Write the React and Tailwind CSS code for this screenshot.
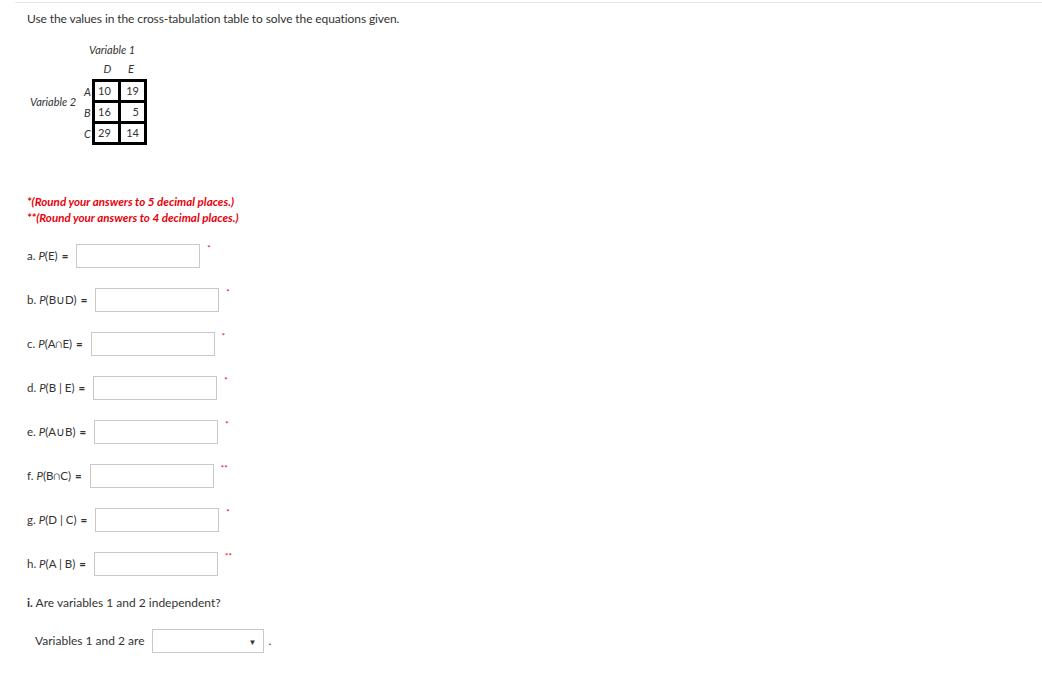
import React, { useState } from 'react';

const rows = [
  { key: 'a', label: 'P(E)', stars: '*' },
  { key: 'b', label: 'P(B\u222AD)', stars: '*' },
  { key: 'c', label: 'P(A\u2229E)', stars: '*' },
  { key: 'd', label: 'P(B | E)', stars: '*' },
  { key: 'e', label: 'P(A\u222AB)', stars: '*' },
  { key: 'f', label: 'P(B\u2229C)', stars: '**' },
  { key: 'g', label: 'P(D | C)', stars: '*' },
  { key: 'h', label: 'P(A | B)', stars: '**' },
];

const table = [
  ['A', '10', '19'],
  ['B', '16', '5'],
  ['C', '29', '14'],
];

const App = () => {
  const [answers, setAnswers] = useState({});
  const [independent, setIndependent] = useState('');

  const handleChange = (key, e) => {
    setAnswers((prev) => ({ ...prev, [key]: e.target.value }));
  };

  return (
    <div className="min-h-[678px] bg-white font-['Lato',sans-serif] text-[#333]">
      <div className="ml-[15px] pt-[2px]">
        <div className="border-t border-[#e8e8e8] pl-[12px] pt-[9px]">
          <p className="text-[12px] leading-[14px] tracking-[-0.1px]">
            Use the values in the cross-tabulation table to solve the equations given.
          </p>

          {/* cross-tab */}
          <div className="mt-[17px] flex text-[11px]">
            <div className="w-[57px] pl-[3px] pt-[51px] italic">Variable 2</div>
            <div>
              <div className="ml-[5px] leading-[14px] italic">Variable 1</div>
              <div className="mt-[5px] flex pl-[8px] leading-[14px] italic">
                <span className="w-[28px] text-center pl-[3px]">D</span>
                <span className="w-[20px] text-center pl-[2px]">E</span>
              </div>
              <div className="mt-[3px] flex">
                <div className="flex w-[8px] flex-col pt-[2px] italic leading-[21px]">
                  {table.map((r) => (
                    <span key={r[0]}>{r[0]}</span>
                  ))}
                </div>
                <div className="grid grid-cols-[23px_23px] gap-[3px] bg-black p-[3px]">
                  {table.map((r) => (
                    <React.Fragment key={r[0]}>
                      <div className="h-[18px] bg-white pl-[3px] leading-[18px]">{r[1]}</div>
                      <div className="h-[18px] bg-white pr-[5px] text-right leading-[18px]">{r[2]}</div>
                    </React.Fragment>
                  ))}
                </div>
              </div>
            </div>
          </div>

          <div className="mt-[49px] text-[11.6px] font-bold italic leading-[16px] text-[#e8000b]">
            <p>*(Round your answers to 5 decimal places.)</p>
            <p>**(Round your answers to 4 decimal places.)</p>
          </div>

          <div className="mt-[18px] flex flex-col gap-[20px] text-[11.5px]">
            {rows.map((row) => (
              <div key={row.key} className="flex items-center">
                <span className="whitespace-pre">
                  {row.key}.{' '}
                  <span className="italic">P</span>
                  {row.label.slice(1)}
                </span>
                <span className="ml-[4px] font-bold">=</span>
                <input
                  type="text"
                  value={answers[row.key] || ''}
                  onChange={(e) => handleChange(row.key, e)}
                  className="ml-[8px] h-[24px] w-[124px] border border-[#c8c8c8] bg-white px-[4px] text-[11px] outline-none"
                />
                <span className="ml-[7px] self-start text-[8px] leading-[8px] text-[#e8000b]">{row.stars}</span>
              </div>
            ))}
          </div>

          <p className="mt-[20px] text-[12px] leading-[14px]">
            <span className="font-bold">i.</span> Are variables 1 and 2 independent?
          </p>

          <div className="mt-[19px] flex items-center pl-[8px] text-[12px]">
            <span>Variables 1 and 2 are</span>
            <div className="relative ml-[7px] h-[24px] w-[112px] border border-[#c8c8c8] bg-white">
              <select
                value={independent}
                onChange={(e) => setIndependent(e.target.value)}
                className="h-full w-full appearance-none bg-transparent px-[4px] text-[11px] outline-none"
              >
                <option value=""></option>
                <option value="independent">independent</option>
                <option value="dependent">dependent</option>
              </select>
              <span className="pointer-events-none absolute right-[6px] top-[6px] text-[8px] text-[#333]">&#9660;</span>
            </div>
            <span className="ml-[5px]">.</span>
          </div>
        </div>
      </div>
    </div>
  );
};

export default App;
